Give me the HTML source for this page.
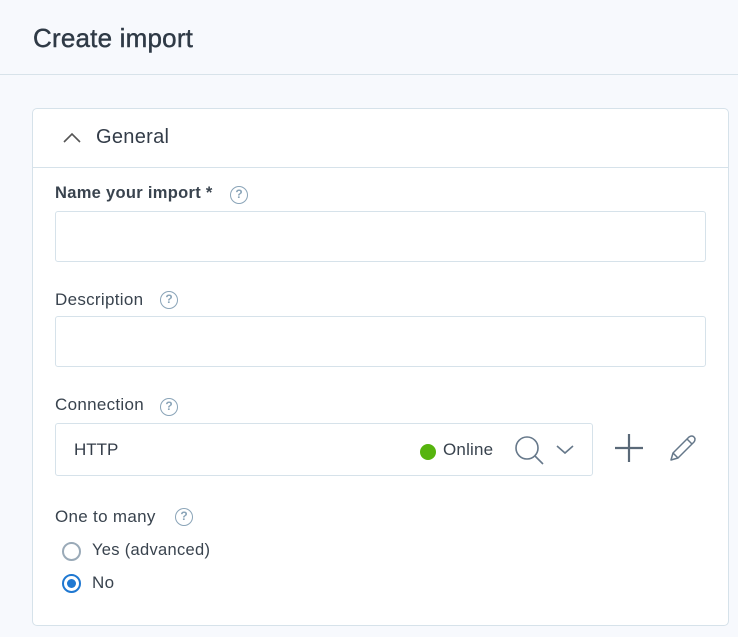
<!DOCTYPE html>
<html><head><style>
*{box-sizing:border-box;margin:0;padding:0}
body{width:738px;height:637px;background:#f7f9fd;font-family:"Liberation Sans",sans-serif;color:#333c48;position:relative;overflow:hidden}
.a{position:absolute}
.hdr{left:0;top:0;width:738px;height:75px;border-bottom:1px solid #d8e3ea}
h1{position:absolute;left:33px;top:23px;font-size:26px;font-weight:normal;letter-spacing:0.2px;color:#2f3a46;-webkit-text-stroke:0.4px #2f3a46}
.card{left:32px;top:108px;width:697px;height:518px;background:#fff;border:1px solid #d6e2ea;border-radius:5px}
.sep{left:33px;top:167px;width:695px;height:1px;background:#d6e2ea}
.lbl{font-size:17px;color:#39434e;letter-spacing:0.3px}
.q{display:inline-block;width:18px;height:18px;border:1.5px solid #8aa4b8;border-radius:50%;color:#8aa4b8;font-size:12px;text-align:center;line-height:15px;font-weight:bold}
.inp{background:#fff;border:1px solid #d6e2ea;border-radius:3px}
.rad{width:19px;height:19px;border-radius:50%;border:2px solid #9aaab8}
</style></head><body>
<div class="a hdr"><h1>Create import</h1></div>
<div class="a card"></div>
<div class="a sep"></div>
<svg class="a" style="left:62px;top:131px" width="20" height="14"><path d="M2 11 L10 3 L18 11" fill="none" stroke="#555" stroke-width="1.6"/></svg>
<div class="a" style="left:96px;top:126px;font-size:20px;color:#333c48;letter-spacing:0.3px">General</div>
<div class="a lbl" style="left:55px;top:184px;font-weight:bold;font-size:16.5px">Name your import *</div>
<div class="a q" style="left:230px;top:186px">?</div>
<div class="a inp" style="left:55px;top:211px;width:651px;height:51px"></div>
<div class="a lbl" style="left:55px;top:290px">Description</div>
<div class="a q" style="left:160px;top:291px">?</div>
<div class="a inp" style="left:55px;top:316px;width:651px;height:51px"></div>
<div class="a lbl" style="left:55px;top:395px">Connection</div>
<div class="a q" style="left:160px;top:398px">?</div>
<div class="a inp" style="left:55px;top:423px;width:538px;height:53px"></div>
<div class="a" style="left:74px;top:440px;font-size:17px;color:#333c48">HTTP</div>
<div class="a" style="left:420px;top:444px;width:16px;height:16px;border-radius:50%;background:#56b40e"></div>
<div class="a" style="left:443px;top:440px;font-size:17px;color:#39434e;letter-spacing:0.2px">Online</div>
<svg class="a" style="left:513px;top:434px" width="34" height="34"><circle cx="14" cy="14" r="11" fill="none" stroke="#66788a" stroke-width="1.6"/><path d="M22 22 L30 30" stroke="#66788a" stroke-width="1.6"/></svg>
<svg class="a" style="left:555px;top:443px" width="20" height="12"><path d="M2 3 L10 10 L18 3" fill="none" stroke="#66788a" stroke-width="1.6"/></svg>
<svg class="a" style="left:613px;top:432px" width="32" height="32"><path d="M16 2 V30 M2 16 H30" stroke="#5a6978" stroke-width="2.2"/></svg>
<svg class="a" style="left:668px;top:433px" width="30" height="30"><path d="M3 27 L5 20 L21 4 Q24 2 26 4 Q28 6 26 9 L10 25 Z M19 6 L24 11 M5 20 L10 25" fill="none" stroke="#66788a" stroke-width="1.5" stroke-linejoin="round"/></svg>
<div class="a lbl" style="left:55px;top:507px">One to many</div>
<div class="a q" style="left:175px;top:508px">?</div>
<div class="a rad" style="left:62px;top:542px"></div>
<div class="a lbl" style="left:92px;top:541px;font-size:16.5px">Yes (advanced)</div>
<div class="a rad" style="left:62px;top:574px;border-color:#1f78d1"><div style="margin:3px;width:9px;height:9px;border-radius:50%;background:#1f78d1"></div></div>
<div class="a lbl" style="left:92px;top:573px">No</div>
</body></html>
